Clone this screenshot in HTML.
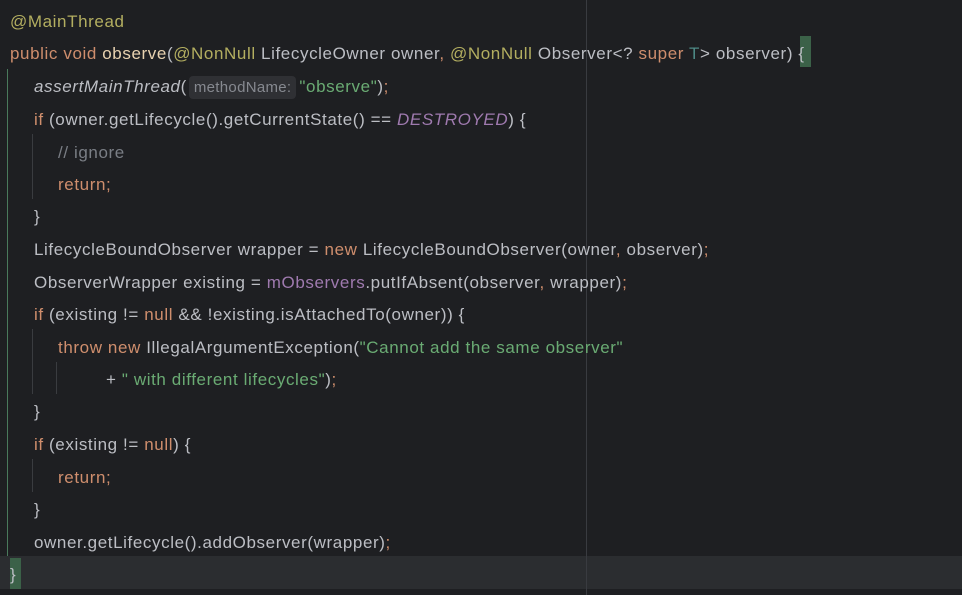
<!DOCTYPE html>
<html><head><style>
body{margin:0;width:962px;height:595px;background:#1e1f22;overflow:hidden;position:relative;font-family:"Liberation Sans","DejaVu Sans",sans-serif;font-size:17px;letter-spacing:0.6px;color:#bcbec4}
.l{position:absolute;height:32px;line-height:32px;white-space:pre}
.k{color:#cf8e6d}.a{color:#b3ae60}.s{color:#6aab73}.c{color:#7a7e85}.p{color:#9f7aaf}.m{color:#e8d2b0}.t{color:#4e8a86}
.i{font-style:italic}
.hint{background:#2f3034;color:#868990;font-size:15px;letter-spacing:0.3px;border-radius:4px;padding:3px 5px;margin:0 3px 0 2px}
.g{position:absolute;width:1px;background:#3a3c40}
</style></head><body>
<div style="position:absolute;left:0;top:556px;width:962px;height:33px;background:#2b2d30"></div>
<div style="position:absolute;left:586px;top:0;width:1px;height:595px;background:#393b40"></div>
<div style="position:absolute;left:7px;top:69px;width:1px;height:487px;background:#4a7a5c"></div>
<div class="g" style="left:32px;top:134px;height:65px"></div>
<div class="g" style="left:32px;top:329px;height:65px"></div>
<div class="g" style="left:56px;top:362px;height:32px"></div>
<div class="g" style="left:32px;top:459px;height:33px"></div>
<div style="position:absolute;left:800px;top:36px;width:11px;height:31px;background:#3b6148"></div>
<div style="position:absolute;left:10px;top:558px;width:11px;height:31px;background:#3b6148"></div>
<div class="l a" style="left:10px;top:6px">@MainThread</div>
<div class="l" style="left:10px;top:38px"><span class="k">public void </span><span class="m">observe</span>(<span class="a">@NonNull</span> LifecycleOwner owner<span class="k">, </span><span class="a">@NonNull</span> Observer&lt;? <span class="k">super </span><span class="t">T</span>&gt; observer) {</div>
<div class="l" style="left:34px;top:71px"><span class="i">assertMainThread</span>(<span class="hint">methodName:</span><span class="s">"observe"</span>)<span class="k">;</span></div>
<div class="l" style="left:34px;top:104px"><span class="k">if </span>(owner.getLifecycle().getCurrentState() == <span class="p i">DESTROYED</span>) {</div>
<div class="l c" style="left:58px;top:137px">// ignore</div>
<div class="l k" style="left:58px;top:169px">return;</div>
<div class="l" style="left:34px;top:201px">}</div>
<div class="l" style="left:34px;top:234px">LifecycleBoundObserver wrapper = <span class="k">new </span>LifecycleBoundObserver(owner<span class="k">, </span>observer)<span class="k">;</span></div>
<div class="l" style="left:34px;top:267px">ObserverWrapper existing = <span class="p">mObservers</span>.putIfAbsent(observer<span class="k">, </span>wrapper)<span class="k">;</span></div>
<div class="l" style="left:34px;top:299px"><span class="k">if </span>(existing != <span class="k">null</span> &amp;&amp; !existing.isAttachedTo(owner)) {</div>
<div class="l" style="left:58px;top:332px"><span class="k">throw new </span>IllegalArgumentException(<span class="s">"Cannot add the same observer"</span></div>
<div class="l" style="left:106px;top:364px">+ <span class="s">" with different lifecycles"</span>)<span class="k">;</span></div>
<div class="l" style="left:34px;top:396px">}</div>
<div class="l" style="left:34px;top:429px"><span class="k">if </span>(existing != <span class="k">null</span>) {</div>
<div class="l k" style="left:58px;top:462px">return;</div>
<div class="l" style="left:34px;top:494px">}</div>
<div class="l" style="left:34px;top:527px">owner.getLifecycle().addObserver(wrapper)<span class="k">;</span></div>
<div class="l" style="left:10px;top:559px">}</div>
</body></html>
